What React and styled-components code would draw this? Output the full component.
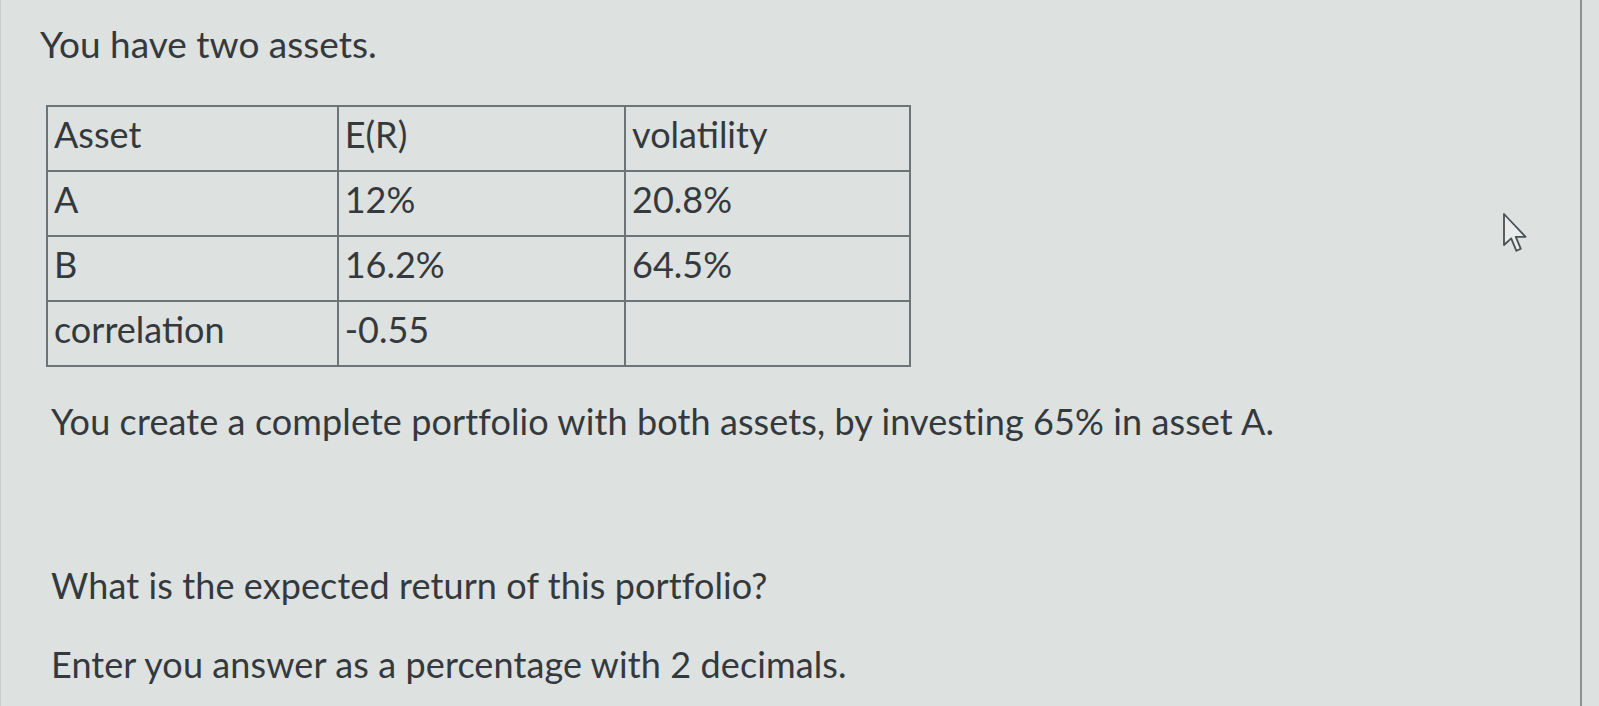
import React from 'react';
import styled, { createGlobalStyle } from 'styled-components';

const GlobalStyle = createGlobalStyle`
  html, body {
    margin: 0;
    padding: 0;
    background: #dde1df;
  }
  body {
    font-family: Lato, "Open Sans", sans-serif;
    color: #34393d;
  }
`;

const Screen = styled.div`
  position: relative;
  width: 1599px;
  height: 706px;
  overflow: hidden;
  background: #dde1df;
`;

const Panel = styled.div`
  width: 1582px;
  height: 706px;
  box-sizing: border-box;
  border-left: 1px solid #c9cdcb;
  border-right: 2px solid #8d9192;
  padding: 23px 0 0 39px;
`;

const Title = styled.h1`
  margin: 0;
  font-size: 37px;
  font-weight: 400;
  line-height: 42px;
`;

const Table = styled.table`
  margin: 40px 0 0 6px;
  border-collapse: collapse;
  table-layout: fixed;
  width: 865px;
`;

const Cell = styled.td`
  width: ${p => p.$w}%;
  border: 2px solid #6e7375;
  padding: 6px 6px 15px;
  font-size: 36px;
  line-height: 42px;
  vertical-align: top;
  white-space: nowrap;
`;

const Para = styled.p`
  margin: ${p => p.$top}px 0 0;
  padding-left: 11px;
  font-size: 36px;
  letter-spacing: 0.1px;
  line-height: 42px;
`;

const Cursor = styled.svg`
  position: absolute;
  left: 1502px;
  top: 212px;
`;

const widths = [33.7, 33.3, 33];

const rows = [
  ['Asset', 'E(R)', 'volatility'],
  ['A', '12%', '20.8%'],
  ['B', '16.2%', '64.5%'],
  ['correlation', '-0.55', ''],
];

export default function App() {
  return (
    <Screen>
      <GlobalStyle />
      <Panel>
        <Title>You have two assets.</Title>
        <Table>
          <tbody>
            {rows.map((r, i) => (
              <tr key={i}>
                {r.map((c, j) => (
                  <Cell key={j} $w={widths[j]}>{c}</Cell>
                ))}
              </tr>
            ))}
          </tbody>
        </Table>
        <Para $top={33}>You create a complete portfolio with both assets, by investing 65% in asset A.</Para>
        <Para $top={122}>What is the expected return of this portfolio?</Para>
        <Para $top={37}>Enter you answer as a percentage with 2 decimals.</Para>
      </Panel>
      <Cursor width="28" height="42" viewBox="0 0 14 21">
        <path
          d="M1 1 L1 16.5 L4.6 13.2 L7.2 19.4 L9.4 18.4 L6.9 12.4 L11.8 12.4 Z"
          fill="#e9ecea"
          stroke="#4a4f52"
          strokeWidth="0.9"
          strokeLinejoin="round"
        />
      </Cursor>
    </Screen>
  );
}
